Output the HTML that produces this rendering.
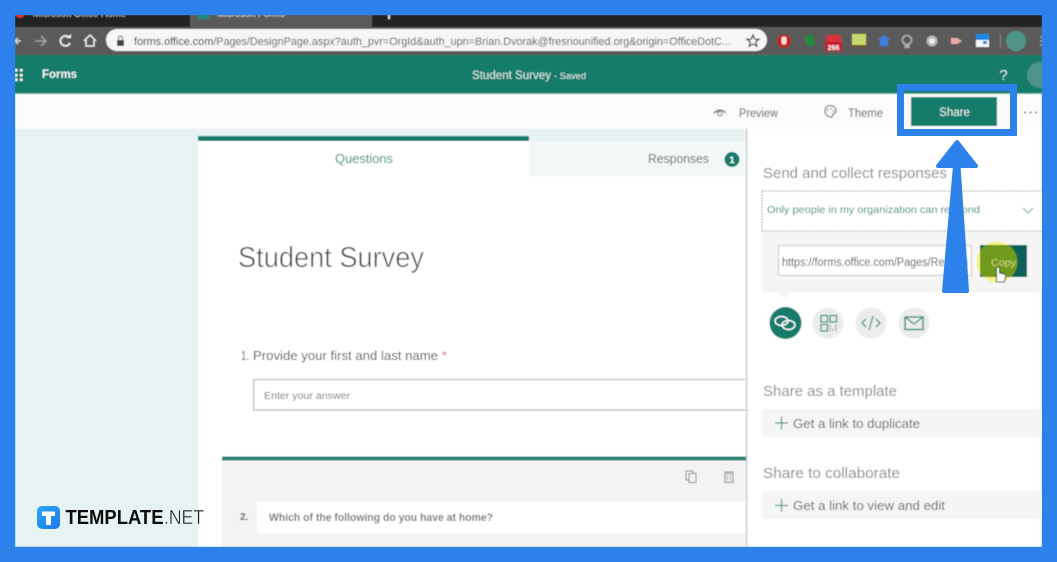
<!DOCTYPE html>
<html><head><meta charset="utf-8"><title>Student Survey</title>
<style>
html,body{margin:0;padding:0;background:#2c81ea;width:1057px;height:562px;overflow:hidden}
svg{display:block}
text{font-family:"Liberation Sans",sans-serif}
</style></head>
<body>
<svg width="1057" height="562" viewBox="0 0 1057 562" xmlns="http://www.w3.org/2000/svg">
<defs>
<filter id="b" x="0" y="0" width="100%" height="100%"><feGaussianBlur stdDeviation="0.45"/></filter>
<linearGradient id="lg" x1="0" y1="0" x2="1" y2="1"><stop offset="0" stop-color="#2aa8f8"/><stop offset="1" stop-color="#1a78ee"/></linearGradient>
<clipPath id="btn"><rect x="980" y="245" width="47" height="32"/></clipPath>
</defs>
<g filter="url(#b)">
<!-- chrome -->
<rect x="15" y="15" width="1027" height="13" fill="#202124"/>
<rect x="190" y="15" width="182" height="13" fill="#5a5a5a"/>
<rect x="15" y="27" width="1027" height="28" fill="#5a5a5a"/>
<path d="M15 15H189V22Q189 27 184 27H15Z" fill="#202124"/>
<path d="M372 15H1042V27H377Q372 27 372 22Z" fill="#202124"/>
<circle cx="20" cy="13" r="5" fill="#d33"/>
<rect x="198" y="10" width="11" height="9" fill="#1f8a80"/>
<text x="33" y="17" font-size="10" fill="#bbb" textLength="93" lengthAdjust="spacingAndGlyphs">Microsoft Office Home</text>
<text x="217" y="17" font-size="10" fill="#ddd" textLength="68" lengthAdjust="spacingAndGlyphs">Microsoft Forms</text>
<rect x="388" y="15" width="2" height="4" fill="#ddd"/>
<path d="M15 41H21M15 41l3-3M15 41l3 3" stroke="#ddd" stroke-width="1.4" fill="none"/>
<path d="M35 41H46M41 36l5 5-5 5" stroke="#a5a5a5" stroke-width="1.4" fill="none"/>
<path d="M69.500 38A5 5 0 1 0 70 43" stroke="#eee" stroke-width="1.8" fill="none"/><path d="M66 38h5v-4z" fill="#eee"/>
<path d="M84 41l6-6 6 6M86 40v6h8v-6" stroke="#eee" stroke-width="1.5" fill="none"/>
<rect x="106" y="29" width="661" height="22" rx="11" fill="#f6f6f7"/>
<rect x="117" y="40" width="7" height="6" rx="1" fill="#444"/><path d="M118.500 40v-2a2 2 0 0 1 4 0v2" stroke="#444" fill="none"/>
<text x="134" y="45" font-size="11" fill="#555" textLength="597" lengthAdjust="spacingAndGlyphs"><tspan fill="#222">forms.office.com</tspan>/Pages/DesignPage.aspx?auth_pvr=OrgId&amp;auth_upn=Brian.Dvorak@fresnounified.org&amp;origin=OfficeDotC...</text>
<path d="M753 35l1.700 4 4.300.3-3.300 2.700 1.100 4.200-3.800-2.300-3.800 2.300 1.100-4.200-3.300-2.700 4.300-.3z" fill="none" stroke="#333" stroke-width="1.200"/>
<!-- extensions -->
<circle cx="784" cy="41" r="6.500" fill="#d3131f"/><rect x="781.500" y="36.500" width="5" height="8" rx="2" fill="#f6dede"/>
<path d="M805 36q6-3 8 1l2 6q-2 4-6 3-3-1-3-5z" fill="#1f8c3b"/>
<rect x="826" y="35" width="15" height="7" fill="#d8313a"/><rect x="825" y="42" width="17" height="9" fill="#c41f2c"/>
<text x="833.500" y="50" font-size="7" font-weight="bold" text-anchor="middle" fill="#fff">266</text>
<rect x="852" y="34" width="14" height="12" fill="#c7d86c"/><rect x="852" y="45" width="14" height="2" fill="#6e5520"/>
<path d="M878 40l6-5 6 5h-2v6h-8v-6z" fill="#3a7fe0"/>
<circle cx="907" cy="40" r="4.500" fill="none" stroke="#aaa" stroke-width="1.800"/><rect x="904.500" y="44" width="5" height="4" fill="#aaa"/>
<circle cx="932" cy="41" r="5.500" fill="#b5b5b5"/><circle cx="932" cy="41" r="3" fill="#eee"/>
<path d="M951 38h6l5 3-5 3h-6z" fill="#f0a8a8"/>
<rect x="976" y="34" width="13" height="13" fill="#f4f8fc"/><rect x="976" y="34" width="13" height="6" fill="#1e88e5"/><rect x="983" y="41" width="4" height="3" fill="#1e88e5"/>
<rect x="1000" y="34" width="1" height="14" fill="#888"/>
<circle cx="1016" cy="41" r="10" fill="#4f9489"/>
<circle cx="1041" cy="37" r="1" fill="#aaa"/><circle cx="1041" cy="41" r="1" fill="#aaa"/><circle cx="1041" cy="45" r="1" fill="#aaa"/>
<!-- header -->
<rect x="15" y="55" width="1027" height="38" fill="#127b6b"/>
<rect x="15" y="93" width="1027" height="1" fill="#5fb0a2"/>
<g fill="#fff"><rect x="15" y="69" width="2.500" height="2.500"/><rect x="20" y="69" width="2.500" height="2.500"/><rect x="15" y="74" width="2.500" height="2.500"/><rect x="20" y="74" width="2.500" height="2.500"/><rect x="15" y="78.500" width="2.500" height="2.500"/><rect x="20" y="78.500" width="2.500" height="2.500"/></g>
<text x="42" y="78" font-size="11.500" font-weight="bold" fill="#f0f6f5" textLength="35" lengthAdjust="spacingAndGlyphs">Forms</text>
<text x="472" y="79" font-size="11.500" fill="#dcebe8" textLength="79" lengthAdjust="spacingAndGlyphs">Student Survey</text>
<text x="554" y="79" font-size="9" fill="#dcebe8" textLength="32" lengthAdjust="spacingAndGlyphs">- Saved</text>
<text x="1003.500" y="80" font-size="15" text-anchor="middle" fill="#cfe3df">?</text>
<circle cx="1040" cy="75" r="13" fill="#4f9489"/>
<!-- command bar -->
<rect x="15" y="94" width="1027" height="35" fill="#fbfbfb"/>
<rect x="15" y="129" width="1027" height="418" fill="#e7f2f2"/>
<path d="M714 113q6-6 12 0" stroke="#666" fill="none" stroke-width="1.100"/><circle cx="720" cy="113.500" r="2.300" fill="none" stroke="#666"/><path d="M720 112q-7 0-6 2" stroke="#666" stroke-width=".6" fill="none"/>
<text x="739" y="117" font-size="11.500" fill="#555" textLength="39" lengthAdjust="spacingAndGlyphs">Preview</text>
<path d="M825 111a5.500 5.500 0 0 1 11 0c0 3-2 2-3 3s0 4-3 3-5-3-5-6z" fill="none" stroke="#666" stroke-width="1.100"/>
<g fill="#666"><circle cx="828" cy="110" r=".8"/><circle cx="831" cy="108.500" r=".8"/><circle cx="833.500" cy="111" r=".8"/></g>
<text x="848" y="117" font-size="11.500" fill="#555" textLength="35" lengthAdjust="spacingAndGlyphs">Theme</text>
<g fill="#666"><circle cx="1025" cy="112.500" r="1"/><circle cx="1030.500" cy="112.500" r="1"/><circle cx="1036" cy="112.500" r="1"/></g>
<!-- form -->
<rect x="198" y="136" width="549" height="411" fill="#fff"/>
<rect x="529" y="136" width="218" height="5" fill="#e7f2f2"/>
<rect x="529" y="141" width="218" height="35" fill="#f2f8f8"/>
<rect x="198" y="136" width="331" height="5" fill="#127b6b"/>
<text x="335" y="163" font-size="12.500" fill="#1f8a78" textLength="58" lengthAdjust="spacingAndGlyphs">Questions</text>
<text x="648" y="163" font-size="12.500" fill="#666" textLength="61" lengthAdjust="spacingAndGlyphs">Responses</text>
<circle cx="732" cy="159.500" r="7.500" fill="#127b6b"/>
<text x="732" y="163" font-size="9.500" font-weight="bold" text-anchor="middle" fill="#fff">1</text>
<text x="238" y="267" font-size="29" fill="#3c3c3c" stroke="#fff" stroke-width=".55" textLength="186" lengthAdjust="spacingAndGlyphs">Student Survey</text>
<text x="241" y="360" font-size="12.500" fill="#555" textLength="8" lengthAdjust="spacingAndGlyphs">1.</text>
<text x="253" y="360" font-size="12.500" fill="#555" textLength="185" lengthAdjust="spacingAndGlyphs">Provide your first and last name</text>
<text x="442" y="360" font-size="12.500" fill="#d9606a">*</text>
<rect x="253.700" y="379.500" width="500" height="30.500" fill="#fff" stroke="#bdbdbd" stroke-width="1.300"/>
<text x="264" y="399" font-size="10" fill="#777" textLength="86" lengthAdjust="spacingAndGlyphs">Enter your answer</text>
<rect x="222" y="460" width="525" height="87" fill="#f3f3f3"/>
<rect x="222" y="456.500" width="525" height="4" fill="#23806f"/>
<rect x="686" y="471" width="7" height="9" fill="none" stroke="#888"/><rect x="689" y="473.500" width="7" height="9" fill="#f3f3f3" stroke="#888"/>
<path d="M724 472h10M725 473.500h8v9h-8z" fill="none" stroke="#888" stroke-width="1.100"/><path d="M727.500 475v6M730.500 475v6" stroke="#aaa"/>
<rect x="257" y="502" width="490" height="31" rx="2" fill="#fff"/>
<text x="240" y="520" font-size="10" font-weight="bold" fill="#555">2.</text>
<text x="269" y="521" font-size="11" font-weight="bold" fill="#777" textLength="224" lengthAdjust="spacingAndGlyphs">Which of the following do you have at home?</text>
<!-- right panel -->
<rect x="746" y="129" width="296" height="418" fill="#fff"/>
<rect x="746" y="129" width="1.500" height="418" fill="#cdcdcd"/>
<text x="763" y="178" font-size="15" fill="#8a8a8a" textLength="184" lengthAdjust="spacingAndGlyphs">Send and collect responses</text>
<rect x="762" y="191" width="285" height="40" fill="#fff" stroke="#666" stroke-width="1" stroke-dasharray="1.500 1.500"/>
<text x="767" y="213" font-size="10.500" fill="#1f8a78" textLength="213" lengthAdjust="spacingAndGlyphs">Only people in my organization can respond</text>
<path d="M1023 208l5 5 5-5" fill="none" stroke="#4b9d8e" stroke-width="1"/>
<rect x="762" y="232" width="285" height="60" fill="#f5f5f5"/>
<path d="M778 292h14l-7 7z" fill="#f5f5f5"/>
<rect x="778.500" y="245.500" width="193" height="30" fill="#fff" stroke="#c4c4c4"/>
<text x="782" y="266" font-size="11.500" fill="#555" textLength="186" lengthAdjust="spacingAndGlyphs">https://forms.office.com/Pages/Respon</text>
<circle cx="997" cy="262" r="20.500" fill="#f6f48e"/>
<rect x="980" y="245" width="47" height="32" fill="#0f5f5a"/>
<circle cx="997" cy="262" r="20.500" fill="#6f9a1f" clip-path="url(#btn)"/>
<text x="991" y="266" font-size="10.500" fill="#d2d77c" textLength="25" lengthAdjust="spacingAndGlyphs">Copy</text>
<path d="M996.500 282v-14q1.500-2.500 3 0v5l5 1q1.500 1 1 3l-1 5z" fill="#fff" stroke="#333" stroke-width="1"/>
<circle cx="785.500" cy="323" r="16" fill="#127b6b"/>
<ellipse cx="781.500" cy="321" rx="6.500" ry="4.500" fill="none" stroke="#fff" stroke-width="1.400"/>
<ellipse cx="788.500" cy="325" rx="6.500" ry="4.500" fill="none" stroke="#fff" stroke-width="1.400"/>
<circle cx="828" cy="323" r="15.500" fill="#ececec"/>
<g fill="none" stroke="#3f9484" stroke-width="1.300"><rect x="821" y="315.500" width="6.500" height="6.500"/><rect x="830" y="315.500" width="6.500" height="6.500"/><rect x="821" y="324.500" width="6.500" height="6.500"/><path d="M830 325v6M833 329v2M836 325v6" stroke-dasharray="1.500 1"/></g>
<circle cx="871" cy="323" r="15.500" fill="#ececec"/>
<path d="M866 319l-4 4 4 4M876 319l4 4-4 4M873 316l-4 14" fill="none" stroke="#3f9484" stroke-width="1.300"/>
<circle cx="914" cy="323" r="15.500" fill="#ececec"/>
<rect x="905" y="317" width="18" height="12.500" fill="none" stroke="#3f9484" stroke-width="1.500"/>
<path d="M905 317l9 7 9-7" fill="none" stroke="#3f9484" stroke-width="1.300"/>
<text x="763" y="396" font-size="15" fill="#8a8a8a" textLength="134" lengthAdjust="spacingAndGlyphs">Share as a template</text>
<rect x="762" y="409" width="285" height="28" rx="2" fill="#f5f5f5"/>
<path d="M775 423h13M781.500 416.500v13" stroke="#4b9d8e" stroke-width="1.200"/>
<text x="793" y="428" font-size="13" fill="#666" textLength="127" lengthAdjust="spacingAndGlyphs">Get a link to duplicate</text>
<text x="763" y="478" font-size="15" fill="#8a8a8a" textLength="137" lengthAdjust="spacingAndGlyphs">Share to collaborate</text>
<rect x="762" y="491" width="285" height="28" rx="2" fill="#f5f5f5"/>
<path d="M775 505.500h13M781.500 499v13" stroke="#4b9d8e" stroke-width="1.200"/>
<text x="793" y="510" font-size="13" fill="#666" textLength="152" lengthAdjust="spacingAndGlyphs">Get a link to view and edit</text>
<!-- share button -->
<rect x="911" y="97" width="86" height="29" fill="#127b6b"/>
<text x="954.500" y="116" font-size="11.500" fill="#e6f2f0" text-anchor="middle">Share</text>
</g>
<!-- annotation -->
<rect x="900.500" y="87.500" width="113" height="45" fill="none" stroke="#2c81ea" stroke-width="7"/>
<path d="M957 142L976 166H958.500L967 291H944L955 166H938Z" fill="#2c81ea" stroke="#2c81ea" stroke-width="4" stroke-linejoin="round"/>
<!-- frame -->
<path fill-rule="evenodd" fill="#2c81ea" d="M0 0H1057V562H0ZM15 15V547H1042V15Z"/>
<!-- logo -->
<rect x="37" y="506" width="23" height="23" rx="5" fill="url(#lg)"/>
<path d="M42 511.500H55V516H51V525H46V516H42Z" fill="#fff"/>
<text x="65.500" y="524" font-size="20" font-weight="bold" fill="#0c0c0c" textLength="98" lengthAdjust="spacingAndGlyphs">TEMPLATE</text>
<text x="164" y="524" font-size="20" fill="#222" stroke="#e9f2f2" stroke-width=".4" textLength="40" lengthAdjust="spacingAndGlyphs">.NET</text>
</svg>
</body></html>
